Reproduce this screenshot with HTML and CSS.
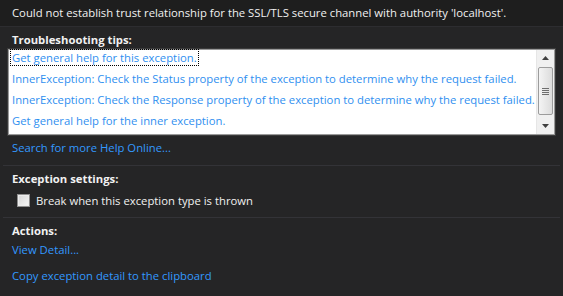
FILE: index.html
```html
<!DOCTYPE html>
<html>
<head>
<meta charset="utf-8">
<link rel="stylesheet" href="styles.css">
</head>
<body>
<div class="top">Could not establish trust relationship for the SSL/TLS secure channel with authority 'localhost'.</div>
<div class="tips">
  <div class="heading tips-heading">Troubleshooting tips:</div>
  <div class="box">
    <div class="list">
      <div class="item first"><span class="link focus">Get general help for this exception.</span></div>
      <div class="item"><span class="link">InnerException: Check the Status property of the exception to determine why the request failed.</span></div>
      <div class="item"><span class="link">InnerException: Check the Response property of the exception to determine why the request failed.</span></div>
      <div class="item"><span class="link">Get general help for the inner exception.</span></div>
    </div>
    <div class="scroll">
      <div class="btn up"><svg width="7" height="4" viewBox="0 0 7 4"><path d="M0 4 L3.5 0 L7 4 Z" fill="#404040"/></svg></div>
      <div class="thumb"><div class="grip"></div><div class="grip"></div><div class="grip"></div><div class="grip"></div></div>
      <div class="track"></div>
      <div class="btn down"><svg width="7" height="4" viewBox="0 0 7 4"><path d="M0 0 L3.5 4 L7 0 Z" fill="#404040"/></svg></div>
    </div>
  </div>
  <div class="link search">Search for more Help Online...</div>
</div>
<div class="divider"></div>
<div class="settings">
  <div class="heading">Exception settings:</div>
  <div class="check-row"><span class="checkbox"></span><span class="label">Break when this exception type is thrown</span></div>
</div>
<div class="divider"></div>
<div class="actions">
  <div class="heading">Actions:</div>
  <div class="link action">View Detail...</div>
  <div class="link action">Copy exception detail to the clipboard</div>
  <div class="link action">Open exception settings</div>
</div>
</body>
</html>
```
FILE: styles.css
```css
html, body {
  margin: 0;
  padding: 0;
  background: #252526;
  width: 563px;
  height: 296px;
  overflow: hidden;
}
body {
  font-family: "Open Sans", "Noto Sans", sans-serif;
  font-size: 11.3px;
  color: #f1f1f1;
}
.top {
  height: 26px;
  line-height: 26px;
  padding-left: 12px;
  background: #1e1e1e;
  border-bottom: 1px solid #2d2d30;
  white-space: nowrap;
}
.heading {
  font-weight: bold;
  line-height: 16px;
  height: 16px;
  padding-left: 12px;
  color: #f1f1f1;
}
.tips-heading {
  margin-top: 5px;
}
.link {
  color: #3399ff;
}
.box {
  margin: 1px 0 0 8px;
  width: 545px;
  height: 84px;
  background: #ffffff;
  border: 1px solid #9a9a9a;
  box-shadow: 0 0 0 1px #3a3a3a;
  display: flex;
}
.list {
  flex: 1;
  padding: 0 0 0 3px;
}
.item {
  line-height: 15px;
  height: 15px;
  margin-top: 6px;
  white-space: nowrap;
}
.item.first {
  margin-top: 0;
}
.focus {
  outline: 1px dotted #000;
  outline-offset: 0;
  display: inline-block;
  padding: 0 1px;
  margin-left: -1px;
}
.list .link {
  color: #2f8ff0;
}
.scroll {
  width: 17px;
  background: #f0f0f0;
  display: flex;
  flex-direction: column;
  border-left: 1px solid #e6e6e6;
}
.btn {
  height: 16px;
  display: flex;
  align-items: center;
  justify-content: center;
}
.thumb {
  margin: 1px 1px 0 1px;
  height: 46px;
  border: 1px solid #9c9c9c;
  border-radius: 2px;
  background: linear-gradient(to right, #f4f4f4, #dcdcdc);
  display: flex;
  flex-direction: column;
  align-items: center;
  justify-content: center;
  gap: 1px;
}
.grip {
  width: 7px;
  height: 1px;
  background: #6e6e6e;
}
.track {
  flex: 1;
}
.search {
  margin-top: 5px;
  padding-left: 12px;
  line-height: 15px;
  height: 15px;
}
.divider {
  margin: 10px 3px 0 3px;
  height: 1px;
  background: #333337;
}
.settings .heading {
  margin-top: 5px;
}
.check-row {
  display: flex;
  align-items: center;
  margin-top: 6px;
  padding-left: 17px;
  height: 15px;
}
.checkbox {
  width: 11px;
  height: 11px;
  border: 1px solid #8e8e8e;
  background: linear-gradient(135deg, #d6d6d6, #f6f6f6);
  box-shadow: inset 0 0 0 1px #ececec;
}
.label {
  margin-left: 6px;
  line-height: 15px;
}
.settings + .divider {
  margin-top: 9px;
}
.actions .heading {
  margin-top: 5px;
}
.action {
  padding-left: 12px;
  line-height: 15px;
  height: 15px;
  white-space: nowrap;
}
.action + .action {
  margin-top: 11px;
}
.actions .heading + .action {
  margin-top: 3px;
}
```
